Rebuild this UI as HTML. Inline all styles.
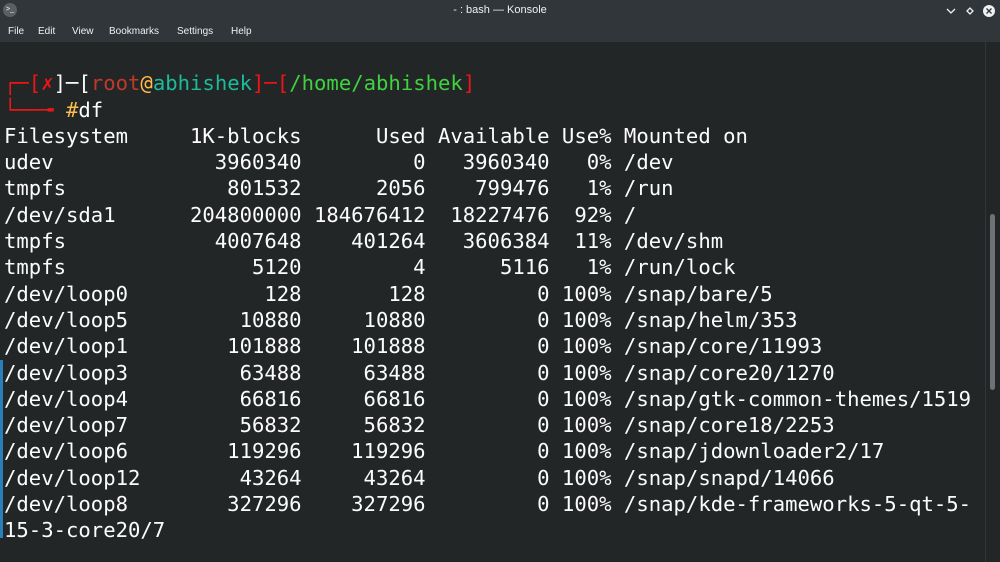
<!DOCTYPE html>
<html><head><meta charset="utf-8"><style>
*{margin:0;padding:0;box-sizing:border-box}
body{width:1000px;height:562px;overflow:hidden;background:#232627;position:relative;font-family:"Liberation Sans","DejaVu Sans",sans-serif}
#title{position:absolute;left:0;top:0;width:1000px;height:21px;background:#31363b;color:#eff0f1;font-size:11px;text-align:center;line-height:20px}
#menu{position:absolute;left:0;top:21px;width:1000px;height:21px;background:#31363b;color:#eff0f1;font-size:10px;line-height:21px}
#menu span{position:absolute;top:0}
#term{position:absolute;left:0;top:42px;width:985px;height:520px;background:#232627}
pre{position:absolute;left:4px;top:44px;font-family:"DejaVu Sans Mono","Liberation Mono",monospace;font-size:20.6px;line-height:26.3px;color:#fcfcfc;white-space:pre}
.r{color:#ed1515}.dr{color:#c0392b}.y{color:#fdbc4b}.t{color:#1abc9c}.g{color:#3fd23f}.w{color:#fcfcfc}
#sb{position:absolute;left:985px;top:42px;width:15px;height:520px;background:#232627;border-left:1px solid #31363b}
#thumb{position:absolute;left:990px;top:214px;width:5px;height:176px;border-radius:3px;background:#6e7175}
#mark{position:absolute;left:0;top:360px;width:3px;height:178px;background:#2980b9}
</style></head><body>
<div id="title"><div style="position:absolute;left:3px;top:3px;width:14px;height:14px;border-radius:50%;background:#5a5f64;color:#fff;font-size:7px;line-height:14px;text-align:center">&gt;_</div>- : bash — Konsole
<svg style="position:absolute;left:945px;top:5px" width="50" height="12" viewBox="0 0 50 12"><path d="M2 4l4 4 4-4" stroke="#eff0f1" stroke-width="1.3" fill="none"/><path d="M22 6l3-3 3 3-3 3z" stroke="#eff0f1" stroke-width="1.3" fill="none"/><circle cx="44" cy="6" r="6" fill="#eff0f1"/><path d="M41.5 3.5l5 5M46.5 3.5l-5 5" stroke="#31363b" stroke-width="1.3"/></svg></div>
<div id="menu"><span style="left:8px">File</span><span style="left:38px">Edit</span><span style="left:72px">View</span><span style="left:109px">Bookmarks</span><span style="left:177px">Settings</span><span style="left:231px">Help</span></div>
<div id="term"></div>
<pre>

<span class="r">┌─[</span><span class="r">✗</span><span class="w">]─[</span><span class="dr">root</span><span class="y">@</span><span class="t">abhishek</span><span class="r">]─[</span><span class="g">/home/abhishek</span><span class="r">]</span>
<span class="r">└──╼ </span><span class="y">#</span>df
Filesystem     1K-blocks      Used Available Use% Mounted on
udev             3960340         0   3960340   0% /dev
tmpfs             801532      2056    799476   1% /run
/dev/sda1      204800000 184676412  18227476  92% /
tmpfs            4007648    401264   3606384  11% /dev/shm
tmpfs               5120         4      5116   1% /run/lock
/dev/loop0           128       128         0 100% /snap/bare/5
/dev/loop5         10880     10880         0 100% /snap/helm/353
/dev/loop1        101888    101888         0 100% /snap/core/11993
/dev/loop3         63488     63488         0 100% /snap/core20/1270
/dev/loop4         66816     66816         0 100% /snap/gtk-common-themes/1519
/dev/loop7         56832     56832         0 100% /snap/core18/2253
/dev/loop6        119296    119296         0 100% /snap/jdownloader2/17
/dev/loop12        43264     43264         0 100% /snap/snapd/14066
/dev/loop8        327296    327296         0 100% /snap/kde-frameworks-5-qt-5-
15-3-core20/7</pre>
<div id="mark"></div>
<div id="sb"></div><div id="thumb"></div>
</body></html>
